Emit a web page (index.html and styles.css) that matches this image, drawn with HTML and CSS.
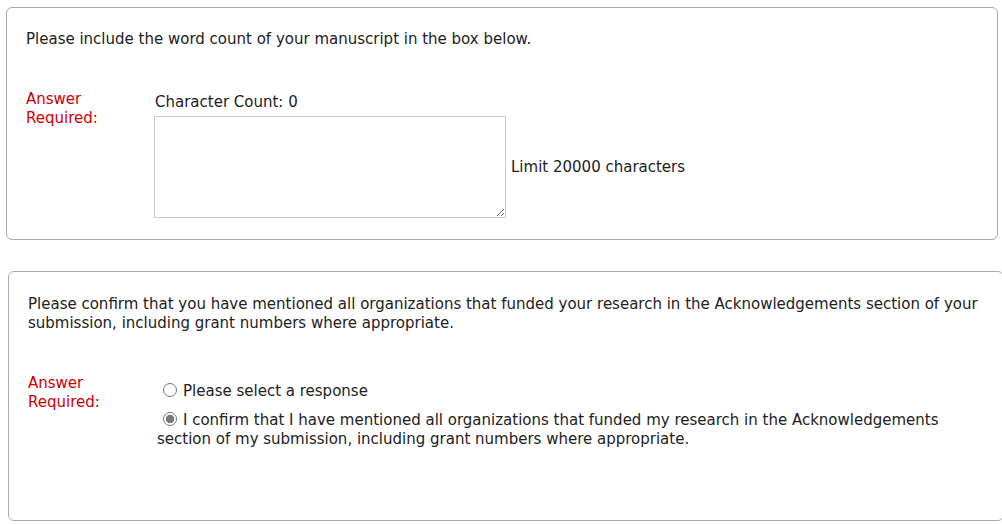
FILE: index.html
```html
<!DOCTYPE html>
<html lang="en">
<head>
<meta charset="utf-8">
<title>Questions</title>
<link rel="stylesheet" href="styles.css">
</head>
<body>
<div class="page">
  <section class="panel panel-one">
    <p class="question">Please include the word count of your manuscript in the box below.</p>
    <div class="answer">
      <div class="required">Answer<br>Required:</div>
      <div class="field field-text">
        <div class="count">Character Count: 0</div>
        <div class="text-row">
          <textarea class="text-box"></textarea>
          <span class="limit">Limit 20000 characters</span>
        </div>
      </div>
    </div>
  </section>

  <section class="panel panel-two">
    <p class="question">Please confirm that you have mentioned all organizations that funded your research in the Acknowledgements section of your submission, including grant numbers where appropriate.</p>
    <div class="answer">
      <div class="required">Answer<br>Required:</div>
      <div class="field field-options">
        <label class="option"><input type="radio" name="fund" class="radio">Please select a response</label>
        <label class="option"><input type="radio" name="fund" class="radio" checked>I confirm that I have mentioned all organizations that funded my research in the Acknowledgements section of my submission, including grant numbers where appropriate.</label>
      </div>
    </div>
  </section>
</div>
</body>
</html>
```
FILE: styles.css
```css
html, body {
  margin: 0;
  padding: 0;
  background: #ffffff;
  overflow: hidden;
}

body {
  font-family: "DejaVu Sans", Verdana, sans-serif;
  font-size: 15px;
  line-height: 19px;
  color: #222222;
}

.page {
  display: flex;
  flex-direction: column;
  padding-top: 7px;
}

.panel {
  border: 1px solid #aaaaaa;
  border-radius: 6px;
  box-sizing: border-box;
}

.panel-one {
  margin-left: 6px;
  width: 992px;
  padding: 22px 19px 21px 19px;
}

.panel-two {
  margin-left: 8px;
  margin-top: 31px;
  width: 996px;
  padding: 23px 19px 71px 19px;
}

.question {
  margin: 0;
  padding-right: 4px;
}

.answer {
  display: grid;
  grid-template-columns: 128px 1fr;
  margin-top: 41px;
}

.required {
  color: #cc0000;
}

.field-text {
  padding-top: 3px;
}

.count {
  padding-left: 1px;
}

.text-row {
  display: flex;
  align-items: center;
  margin-top: 4px;
}

.text-box {
  display: block;
  box-sizing: border-box;
  width: 352px;
  height: 102px;
  border: 1px solid #cccccc;
  margin: 0;
  padding: 2px;
  resize: both;
  font: inherit;
}

.limit {
  margin-left: 5px;
}

.field-options {
  display: flex;
  flex-direction: column;
  gap: 10px;
  padding-top: 8px;
  padding-left: 1px;
}

.option {
  display: block;
}

.radio {
  appearance: none;
  -webkit-appearance: none;
  display: inline-block;
  box-sizing: border-box;
  width: 14px;
  height: 14px;
  margin: 0 6px 0 6px;
  border: 1px solid #767676;
  border-radius: 50%;
  background: #ffffff;
  vertical-align: -1px;
}

.radio:checked {
  background: radial-gradient(circle, #7a7a7a 0 4px, #ffffff 4.5px);
}
```
